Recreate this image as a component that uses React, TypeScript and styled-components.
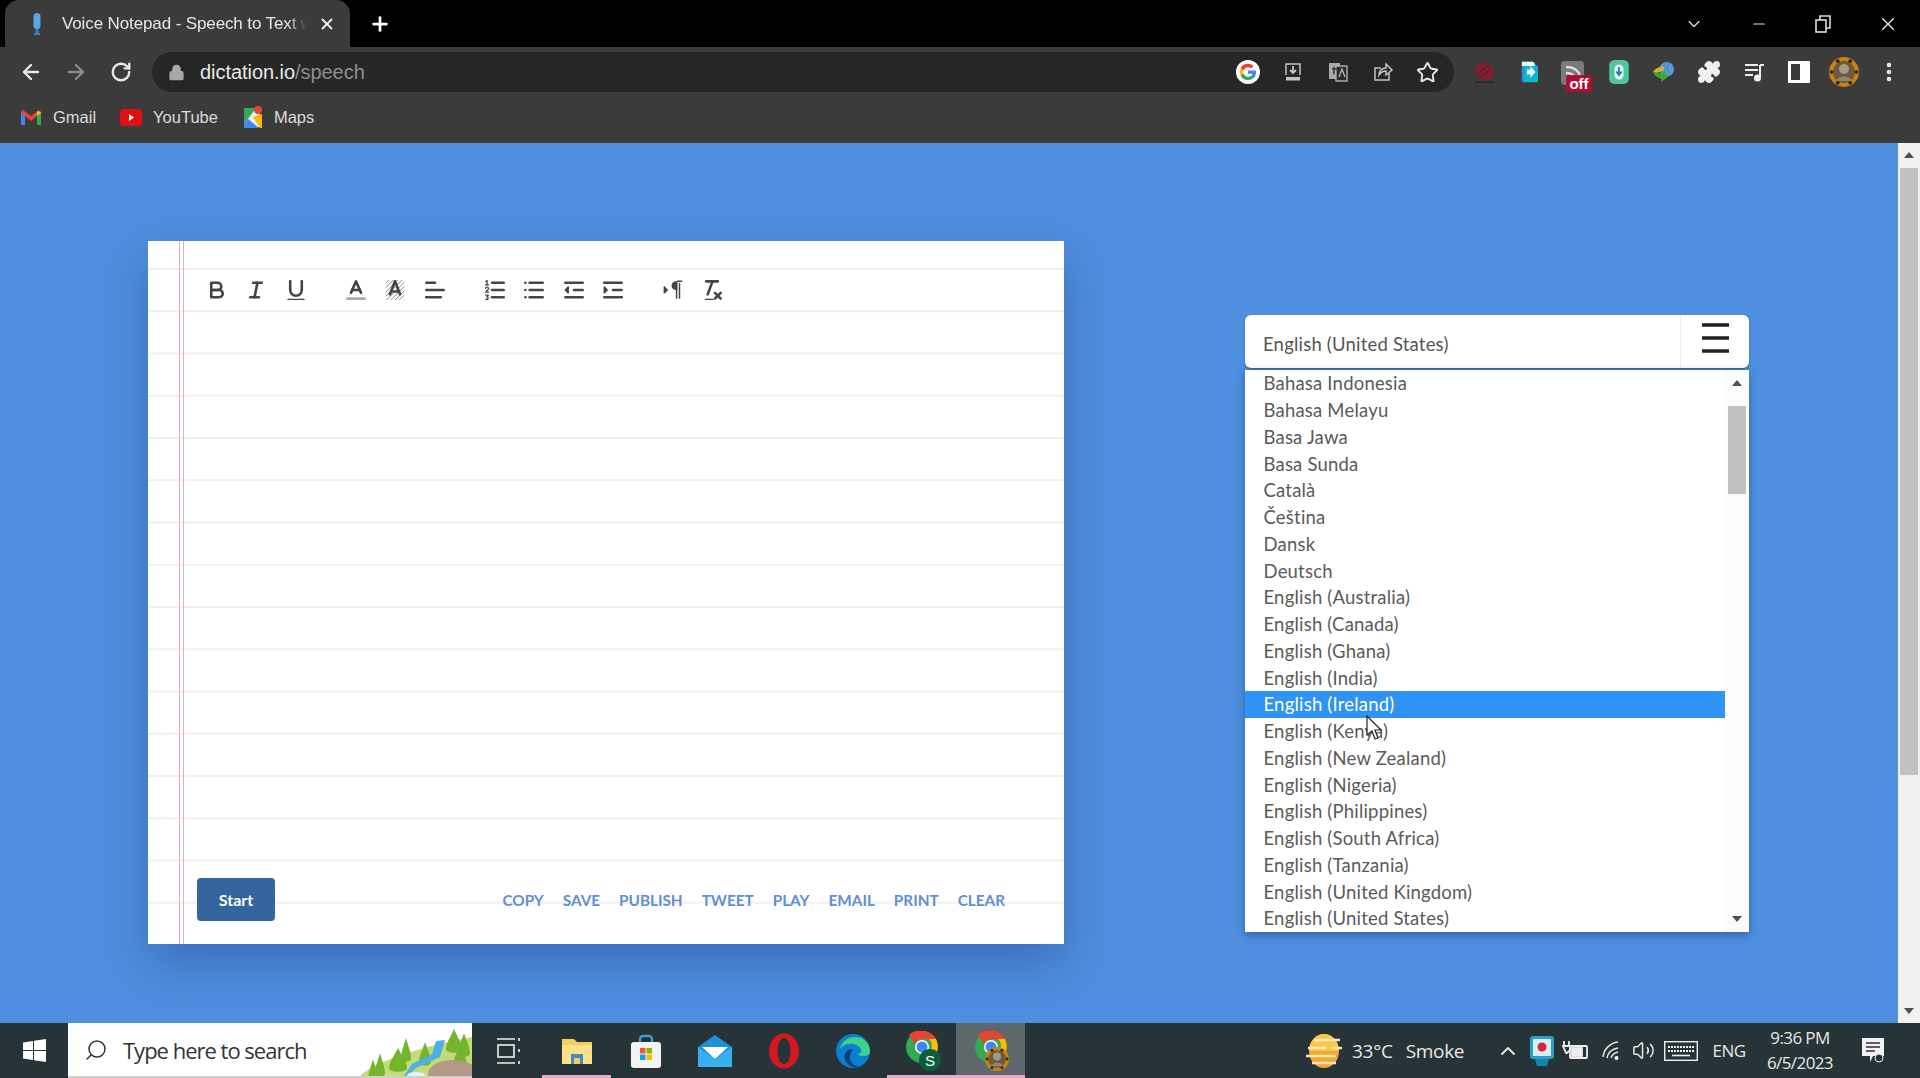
import React from "react";
import styled, { createGlobalStyle } from "styled-components";
import { ArrowLeft, ArrowRight, RotateCw, Lock, Star, Plus, X, Minus, ChevronDown, ChevronUp, Puzzle, EllipsisVertical, Search, Volume2 } from "lucide-react";

const Global = createGlobalStyle`
  html, body { margin: 0; padding: 0; height: 100%; overflow: hidden; background: #000; }
  * { box-sizing: border-box; }
  #root { height: 100%; }
`;

const Screen = styled.div`
  width: 1920px; height: 1078px; display: flex; flex-direction: column; overflow: hidden;
  font-family: "Liberation Sans", Arial, sans-serif;
`;

/* ---- browser chrome ---- */
const TabBar = styled.div`height: 47px; background: #000; display: flex; align-items: stretch; padding-left: 5px; flex: none;`;
const Tab = styled.div`
  width: 345px; background: #3b3b3b; border-radius: 14px 14px 0 0; display: flex; align-items: center; color: #e6e6e6;
  padding-left: 26px;
`;
const TabTitle = styled.span`
  width: 245px; margin-left: 19px; overflow: hidden; white-space: nowrap; font-size: 17px; letter-spacing: -0.12px;
  -webkit-mask-image: linear-gradient(90deg, #000 92%, transparent 100%);
  mask-image: linear-gradient(90deg, #000 92%, transparent 100%);
`;
const TabClose = styled.span`display: flex; margin-left: 11px; color: #eee;`;
const NewTab = styled.span`width: 60px; display: flex; align-items: center; justify-content: center; color: #fff;`;
const TabSpacer = styled.div`flex: 1;`;
const WinBtn = styled.span`width: 64.6px; display: flex; align-items: center; justify-content: center; color: #e8e8e8;`;

const Toolbar = styled.div`height: 50px; background: #3b3b3b; display: flex; align-items: center; padding: 0 8.5px 0 8px; flex: none;`;
const Slot = styled.span<{ $dim?: boolean; $soft?: boolean }>`
  width: 45px; height: 40px; flex: none; display: flex; align-items: center; justify-content: center;
  color: ${(p) => (p.$dim ? "#8a8a8a" : p.$soft ? "#c4c4c4" : "#e8e8e8")};
`;
const Omnibox = styled.div`
  flex: 1; height: 40px; margin: 0 7.5px 0 9px; background: #262626; border-radius: 20px; display: flex; align-items: center;
  padding: 0 4px 0 16px;
`;
const LockWrap = styled.span`display: flex; color: #a8a8a8; margin-right: 15px;`;
const Url = styled.span`font-family: "Liberation Sans", sans-serif; font-size: 20px; color: #e8e8e8; flex: 1; letter-spacing: -0.05px;`;
const UrlPath = styled.span`color: #8f8f8f;`;
const Bookmarks = styled.div`height: 46px; background: #3b3b3b; display: flex; align-items: center; padding: 0 0 6px 20px; flex: none;`;
const Bookmark = styled.span<{ $gap: number }>`
  display: flex; align-items: center; color: #dcdcdc; font-size: 16.5px; margin-right: ${(p) => p.$gap}px; gap: 11px;
`;

/* ---- page ---- */
const Page = styled.div`height: 880px; flex: none; display: flex; background: #4f8fe0;`;
const Content = styled.div`flex: 1; display: flex; align-items: flex-start; padding: 98px 0 0 148px;`;
const Paper = styled.div`
  width: 916px; height: 703px; display: flex; flex-direction: column; box-shadow: 0 20px 46px rgba(20, 40, 90, 0.32);
  background-color: #fff;
  background-image:
    linear-gradient(90deg, transparent 31px, #eba9c3 31px, #eba9c3 32px, transparent 32px, transparent 35px, #eba9c3 35px, #eba9c3 36px, transparent 36px),
    linear-gradient(180deg, #f1eff3 0, #f1eff3 2px, transparent 2px);
  background-size: 100% 100%, 100% 42.25px;
  background-position: 0 0, 0 27px;
`;
const EditorBar = styled.div`display: flex; align-items: center; height: 40px; margin: 29px 0 0 49px;`;
const EditorGroup = styled.div`display: flex; margin-right: 20.4px;`;
const EditorBtn = styled.span`width: 39.5px; height: 40px; display: flex; align-items: center; justify-content: center;`;
const Footer = styled.div`margin-top: auto; display: flex; align-items: center; justify-content: space-between; padding: 0 59px 23px 49px;`;
const StartBtn = styled.button`
  width: 78px; height: 43px; border: 0; border-radius: 4px; background: #34659f; color: #fff; font: 700 16px Lato, sans-serif; padding: 0;
`;
const Actions = styled.div`display: flex; gap: 19px;`;
const ActionLink = styled.span`font: 700 15.3px Lato, sans-serif; color: #5f8fd6;`;

const Panel = styled.div`width: 504px; margin: 74px 0 0 181px; display: flex; flex-direction: column; gap: 2px;`;
const SelectBox = styled.div`
  height: 53px; background: #fff; border-radius: 6px; display: flex; box-shadow: 0 1px 2px rgba(30, 50, 100, 0.6);
  font: 400 18.5px Lato, sans-serif; letter-spacing: 0.2px; color: #555;
`;
const SelectValue = styled.div`flex: 1; display: flex; align-items: center; padding: 4px 0 0 18px; border-right: 1px solid #eee;`;
const MenuBtn = styled.div`width: 68px; display: flex; align-items: center; justify-content: center; padding: 0 0 8px 0;`;
const ListBox = styled.div`
  height: 562px; background: #fff; display: flex; box-shadow: 0 3px 8px rgba(20, 40, 90, 0.45); position: relative;
  font: 400 18.5px Lato, sans-serif; letter-spacing: 0.2px; color: #5a5a5a;
`;
const Options = styled.div`flex: 1; display: flex; flex-direction: column;`;
const Option = styled.div<{ $active?: boolean }>`
  height: 26.75px; flex: none; display: flex; align-items: center; padding-left: 18.5px;
  background: ${(p) => (p.$active ? "#2f93f5" : "transparent")};
  color: ${(p) => (p.$active ? "#fff" : "inherit")};
`;
const ListScroll = styled.div`width: 24px; background: #fbfbfb; display: flex; flex-direction: column; align-items: center;`;
const ArrowUp = styled.span`
  width: 0; height: 0; margin-top: 10px; border: 5px solid transparent; border-top: 0; border-bottom: 6px solid #505050;
`;
const ArrowDown = styled.span`
  width: 0; height: 0; margin-top: auto; margin-bottom: 10px; border: 5px solid transparent; border-bottom: 0; border-top: 6px solid #505050;
`;
const ListThumb = styled.span`width: 18px; height: 88px; background: #c1c1c1; margin-top: 20px;`;
const Cursor = styled.svg`position: absolute; left: 121px; top: 345px;`;

const PageScroll = styled.div`width: 22px; background: #f1f1f1; display: flex; flex-direction: column; align-items: center;`;
const PageArrowUp = styled(ArrowUp)`margin-top: 9px;`;
const PageArrowDown = styled(ArrowDown)`margin-bottom: 9px;`;
const PageThumb = styled.span`width: 18px; height: 607px; background: #c1c1c1; margin-top: 10px;`;

/* ---- taskbar ---- */
const Taskbar = styled.div`height: 55px; flex: none; background: #263337; display: flex; align-items: stretch; color: #e8e8e8;`;
const StartSlot = styled.span`width: 68px; display: flex; align-items: center; justify-content: center;`;
const SearchBox = styled.div`
  width: 404px; background: #fff; display: flex; align-items: center; padding-left: 16px; color: #333; font: 400 22px "Open Sans", sans-serif;
  letter-spacing: -1px; border-bottom: 2px solid #cfcfcf; overflow: hidden;
`;
const SearchLabel = styled.span`margin-left: 15px;`;
const Hills = styled.svg`margin-left: auto; align-self: flex-end;`;
const TaskApps = styled.div`display: flex; margin-left: 1px;`;
const TaskApp = styled.span<{ $active?: boolean; $open?: boolean }>`
  width: 69px; display: flex; align-items: center; justify-content: center;
  background: ${(p) => (p.$active ? "#5e686b" : "transparent")};
  border-bottom: 3px solid ${(p) => (p.$open ? "#e8a9c6" : "transparent")};
  padding-top: 3px;
`;
const Tray = styled.div`margin-left: auto; display: flex; align-items: stretch; padding-right: 23px;`;
const Weather = styled.div`width: 188px; display: flex; align-items: center; font: 400 19px "Open Sans", sans-serif; letter-spacing: -0.3px; gap: 10px; padding-left: 3px;`;
const WeatherWord = styled.span`margin-left: 3px;`;
const TrayItem = styled.span<{ $w: number }>`
  width: ${(p) => p.$w}px; display: flex; align-items: center; justify-content: center; font: 400 17px "Open Sans", sans-serif; letter-spacing: -0.5px;
`;
const Clock = styled.div`
  width: 98px; display: flex; flex-direction: column; align-items: center; justify-content: center; gap: 3px;
  font: 400 17px/22px "Open Sans", sans-serif; letter-spacing: -0.6px;
`;

/* ---- quill icons ---- */
const Q = styled.svg.attrs({ viewBox: "0 0 18 18", width: 26, height: 26 })`
  fill: none; stroke: #444; stroke-width: 1.8; stroke-linecap: round; stroke-linejoin: round;
`;
const Thin = styled.g`stroke-width: 0.9;`;
const Hatch = styled.g`stroke-width: 0.55; stroke: #666; stroke-linecap: butt;`;
const QF = styled.g`fill: #444; stroke: none;`;

const BoldI = () => <Q><path d="M5,4H9.5A2.5,2.5,0,0,1,12,6.5v0A2.5,2.5,0,0,1,9.5,9H5V4Z" /><path d="M5,9h5.5A2.5,2.5,0,0,1,13,11.5v0A2.5,2.5,0,0,1,10.5,14H5V9Z" /></Q>;
const ItalicI = () => <Q><line x1="7" x2="13" y1="4" y2="4" /><line x1="5" x2="11" y1="14" y2="14" /><line x1="8" x2="10" y1="14" y2="4" /></Q>;
const UnderI = () => <Q><path d="M5,3V9a4,4,0,0,0,4,4h0a4,4,0,0,0,4-4V3" /><QF><rect x="3" y="15" width="12" height="1" rx=".5" /></QF></Q>;
const ColorI = () => <Q><line x1="3" x2="15" y1="15" y2="15" stroke="#aaa" /><polyline points="5.5 11 9 3 12.5 11" /><line x1="11.63" x2="6.38" y1="9" y2="9" /></Q>;
const BgI = () => (
  <Q>
    <defs><clipPath id="hatch-box"><rect x="2.5" y="2" width="13" height="14" /></clipPath></defs>
    <Hatch clipPath="url(#hatch-box)">
      {[4, 7, 10, 13, 16, 19, 22, 25, 28, 31, 34].map((c) => (
        <line key={c} x1={c} y1="0" x2="0" y2={c} />
      ))}
    </Hatch>
    <polyline points="5.5 12 9 3 12.5 12" /><line x1="11.63" x2="6.38" y1="10" y2="10" />
  </Q>
);
const AlignI = () => <Q><line x1="3" x2="15" y1="9" y2="9" /><line x1="3" x2="13" y1="14" y2="14" /><line x1="3" x2="9" y1="4" y2="4" /></Q>;
const OlI = () => (
  <Q>
    <line x1="7" x2="15" y1="4" y2="4" /><line x1="7" x2="15" y1="9" y2="9" /><line x1="7" x2="15" y1="14" y2="14" />
    <Thin><line x1="2.5" x2="4.5" y1="5.5" y2="5.5" /><path d="M3.5,5.500V2.500L2.700,3" /><path d="M2.500,7.800a1,1,0,1,1,1.700.9L2.500,10.500h2" /><path d="M2.600,12.500H4.400L3.400,13.800a.9.9,0,1,1-.8,1.400" /></Thin>
  </Q>
);
const UlI = () => <Q><line x1="6" x2="15" y1="4" y2="4" /><line x1="6" x2="15" y1="9" y2="9" /><line x1="6" x2="15" y1="14" y2="14" /><line x1="3" x2="3" y1="4" y2="4" /><line x1="3" x2="3" y1="9" y2="9" /><line x1="3" x2="3" y1="14" y2="14" /></Q>;
const OutdentI = () => <Q><line x1="3" x2="15" y1="14" y2="14" /><line x1="3" x2="15" y1="4" y2="4" /><line x1="9" x2="15" y1="9" y2="9" /><QF><polygon points="5 7 5 11 3 9 5 7" stroke="#444" strokeWidth="1" /></QF></Q>;
const IndentI = () => <Q><line x1="3" x2="15" y1="14" y2="14" /><line x1="3" x2="15" y1="4" y2="4" /><line x1="9" x2="15" y1="9" y2="9" /><QF><polygon points="3 7 3 11 5 9 3 7" stroke="#444" strokeWidth="1" /></QF></Q>;
const DirI = () => <Q><QF><polygon points="3 11 5 9 3 7 3 11" stroke="#444" strokeWidth="1" /><path d="M11,3a3,3,0,0,0,0,6h1V3H11Z" /><rect x="11" y="4" width="1" height="11" /><rect x="13" y="4" width="1" height="11" /></QF><line x1="12" x2="15" y1="3" y2="3" strokeWidth="1" /></Q>;
const CleanI = () => <Q><line x1="5" x2="13" y1="3" y2="3" /><line x1="6" x2="9.35" y1="12" y2="3" /><line x1="11" x2="15" y1="11" y2="15" /><line x1="15" x2="11" y1="11" y2="15" /><QF><rect x="4" y="15" width="6" height="1" rx=".5" /></QF></Q>;

/* ---- brand and extension drawings ---- */
const MicFav = () => <svg width="12" height="24" viewBox="0 0 12 24"><rect x="2.5" y="1" width="7" height="16" rx="3.500" fill="#5aa7e8" /><rect x="4.500" y="17" width="3" height="5" fill="#3b7fc0" /><rect x="3" y="21" width="6" height="2" fill="#3b7fc0" /></svg>;
const GmailI = () => <svg width="22" height="17" viewBox="0 0 22 17"><path d="M1 3v13h4V7l6 5 6-5v9h4V3l-2-2-8 6-8-6z" fill="#ea4335" /><path d="M1 3v13h4V7z" fill="#4285f4" /><path d="M17 7v9h4V3z" fill="#34a853" /><path d="M17 2l4 1v1l-4 3z" fill="#fbbc04" /></svg>;
const YouTubeI = () => <svg width="22" height="17" viewBox="0 0 22 17"><rect width="22" height="17" rx="4" fill="#e01010" /><path d="M9 5l5 3.500L9 12z" fill="#fff" /></svg>;
const MapsI = () => <svg width="20" height="24" viewBox="0 0 20 24"><path d="M1 3h12L1 19z" fill="#34a853" /><path d="M1 19L13 3l6 10-1 9H4z" fill="#e8edf2" /><path d="M1 19l4-5 11 9H1z" fill="#4285f4" /><path d="M10 12l9-3v14h-2z" fill="#fbbc04" /><circle cx="15" cy="5" r="4" fill="#ea4335" /></svg>;
const GoogleI = () => <svg width="24" height="24" viewBox="0 0 24 24"><circle cx="12" cy="12" r="12" fill="#fff" /><path d="M20 12.200c0-.6 0-1.200-.2-1.700H12v3.200h4.500a3.900 3.900 0 0 1-1.700 2.500l2.700 2.100c1.600-1.400 2.500-3.500 2.500-6.100z" fill="#4285f4" /><path d="M12 20c2.200 0 4-.7 5.500-2l-2.700-2.100c-.7.500-1.700.8-2.800.8-2.100 0-3.900-1.400-4.600-3.400L4.600 15.400A8 8 0 0 0 12 20z" fill="#34a853" /><path d="M7.400 13.300a4.800 4.800 0 0 1 0-3L4.600 8.200a8 8 0 0 0 0 7.200z" fill="#fbbc04" /><path d="M12 7.200c1.200 0 2.300.4 3.100 1.200l2.400-2.400A8 8 0 0 0 4.600 8.200l2.800 2.100c.7-1.700 2.500-3.100 4.600-3.100z" fill="#ea4335" /></svg>;
const LineIcon = styled.svg.attrs({ viewBox: "0 0 24 24", width: 24, height: 24 })`fill: none; stroke: currentColor; stroke-width: 1.5;`;
const InstallI = () => <LineIcon><path d="M5 15V4h14v11" /><path d="M12 6v7M9 10l3 3 3-3" strokeWidth="1.8" /><rect x="5" y="17" width="14" height="3.500" fill="currentColor" stroke="none" /></LineIcon>;
const TranslateI = () => <svg width="24" height="24" viewBox="0 0 24 24"><rect x="3" y="3" width="11" height="16" fill="#aaa" /><rect x="10" y="6" width="11" height="15" fill="#2b2b2b" stroke="#bbb" strokeWidth="1.300" /><path d="M6 9h5M8 6.500v8" stroke="#333" strokeWidth="1.400" /><path d="M13 17l3-8 3 8" stroke="#bbb" strokeWidth="1.300" fill="none" /></svg>;
const ShareI = () => <LineIcon><path d="M18 13v7H4V8h6" /><path d="M8 15c0-4 3-7 7-7V4l6 6-6 5v-4c-3 0-5 1-7 4z" /></LineIcon>;
const RedSI = () => (
  <svg width="21" height="23" viewBox="0 0 24 26">
    <circle cx="12" cy="11.500" r="10" fill="#8c1a2c" />
    <path d="M5 14l12-10M7 19l12-10" stroke="#3a3030" strokeWidth="1.800" />
    <rect x="1" y="23.500" width="22" height="1.200" fill="#1f1f1f" />
  </svg>
);
const BlueFileI = () => <svg width="19" height="22" viewBox="0 0 22 26"><path d="M2 1h13l6 6v17a1 1 0 0 1-1 1H5a3 3 0 0 1-3-3z" fill="#12b4d6" /><path d="M2 1h13l2 2v3H2z" fill="#f0f8fb" /><path d="M2 6h3v19a3 3 0 0 1-3-3z" fill="#2f8fe0" /><path d="M8 10h4V6l6 7-6 7v-4H8z" fill="#e9fbff" /></svg>;
const OffI = () => (
  <svg width="34" height="40" viewBox="0 0 34 40" style={{ overflow: "visible" }}>
    <rect x="4" y="9" width="23" height="24" rx="4" fill="#7a7a7a" />
    <path d="M9 21c5 0 8 2 9 5M9 15c8 0 13 4 14 9" stroke="#ddd" strokeWidth="2.400" fill="none" />
    <rect x="9" y="23" width="26" height="17" rx="3" fill="#ae0f2e" />
    <text x="22" y="36.500" fontSize="15" fontWeight="700" fontFamily="Liberation Sans" fill="#fff" textAnchor="middle">off</text>
  </svg>
);
const GreenI = () => <svg width="22" height="24" viewBox="0 0 22 27"><rect width="22" height="27" rx="6" fill="#4ec79f" /><rect x="6" y="5" width="10" height="17" rx="5" fill="#e2f7f0" /><path d="M11 8v8M8 13l3 4 3-4" stroke="#2276c0" strokeWidth="2" fill="none" /></svg>;
const IdmI = () => <svg width="24" height="22" viewBox="0 0 26 24"><circle cx="16" cy="9" r="8" fill="#5d9bd5" /><path d="M12 3c3 3 3 9 0 13M18 2c-2 4-1 10 3 13" stroke="#3f7dc0" fill="none" /><path d="M1 12c3-5 9-6 13-5l-2 3-7 3z" fill="#d8b02e" /><path d="M1 12l10 2v-3l8 5-9 7v-4C6 19 3 16 1 12z" fill="#3fa535" /></svg>;
const QueueI = () => <svg width="24" height="24" viewBox="0 0 24 24" fill="none" stroke="#eee" strokeWidth="2"><path d="M3 5h13M3 10h13M3 15h8" /><path d="M18 5h4M18 5v13" /><circle cx="15.500" cy="18" r="2.500" fill="#eee" /></svg>;
const PanelI = () => <svg width="22" height="22" viewBox="0 0 22 22"><rect x="1.500" y="1.500" width="19" height="19" fill="none" stroke="#fff" strokeWidth="3" /><rect x="12" y="2" width="8" height="18" fill="#fff" /></svg>;
const AvatarI = ({ size = 30 }: { size?: number }) => (
  <svg width={size} height={size} viewBox="0 0 30 30">
    <circle cx="15" cy="15" r="15" fill="#c8820f" />
    <circle cx="15" cy="15" r="11" fill="#6b5a3c" />
    <circle cx="15" cy="12" r="5" fill="#a59a88" />
    <path d="M7 24c2-6 14-6 16 0z" fill="#8d8579" />
    {[0, 60, 120, 180, 240, 300].map((a) => (
      <circle key={a} cx={15 + 12.5 * Math.cos((a * Math.PI) / 180)} cy={15 + 12.5 * Math.sin((a * Math.PI) / 180)} r="1.800" fill="#2a1f0c" />
    ))}
  </svg>
);
const WinLogo = () => <svg width="23" height="23" viewBox="0 0 23 23" fill="#fff"><path d="M0 3.500L10 2v9H0zM11 1.800L23 0v11H11zM0 12h10v9L0 19.500zM11 12h12v11l-12-1.800z" /></svg>;
const treeTops: [number, number, number][] = [
  [13, 36, 5], [20, 30, 5], [38, 25, 9], [46, 15, 5], [65, 19, 6], [94, 6, 8], [104, 10, 6], [100, 22, 7],
];
const HillsArt = () => (
  <Hills width="112" height="53" viewBox="0 0 112 53">
    <path d="M0 53C14 40 50 26 112 14v39z" fill="#c4dc78" />
    {treeTops.map(([x, top, w]) => (
      <path key={`${x}-${top}`} d={`M${x} ${top}C${x + w * 0.3} ${top + 6} ${x + w} ${top + 14} ${x + w} ${top + 20}C${x + w} ${top + 25} ${x - w} ${top + 25} ${x - w} ${top + 20}C${x - w} ${top + 14} ${x - w * 0.3} ${top + 6} ${x} ${top}z`} fill="#74b52e" />
    ))}
    <path d="M76 18l9-1-5 17-24 11-8 8H44l8-12 20-10z" fill="#4fb0e8" />
    <ellipse cx="93" cy="51" rx="25" ry="14" fill="#b39a86" />
    <ellipse cx="56" cy="52" rx="9" ry="3" fill="#e5f3f8" />
  </Hills>
);
const FolderI = () => <svg width="32" height="30" viewBox="0 0 32 30"><path d="M1 3h12l3 3h15v22H1z" fill="#f6cf5b" /><path d="M1 9h30v19H1z" fill="#fce188" /><rect x="10" y="18" width="12" height="10" fill="#3d8fc4" /><rect x="13" y="22" width="6" height="6" fill="#f6cf5b" /></svg>;
const StoreI = () => <svg width="32" height="34" viewBox="0 0 32 34"><path d="M10 9V5a3 3 0 0 1 3-3h6a3 3 0 0 1 3 3v4" fill="none" stroke="#37a0d8" strokeWidth="2.400" /><rect x="1" y="8" width="30" height="26" rx="3" fill="#f3f3f3" /><rect x="10" y="14" width="5.500" height="5.500" fill="#ef5a2a" /><rect x="16.500" y="14" width="5.500" height="5.500" fill="#7fba00" /><rect x="10" y="20.500" width="5.500" height="5.500" fill="#00a4ef" /><rect x="16.500" y="20.500" width="5.500" height="5.500" fill="#ffb900" /></svg>;
const MailI = () => <svg width="34" height="32" viewBox="0 0 34 32"><path d="M0 12L17 0l17 12v20H0z" fill="#1e90d8" /><path d="M4 12h26L17 24z" fill="#fff" /><path d="M0 12v20h34V12L17 24z" fill="#36b0ee" /></svg>;
const OperaI = () => <svg width="32" height="36" viewBox="0 0 32 36"><ellipse cx="16" cy="18" rx="15" ry="17.500" fill="#d5171f" /><ellipse cx="16" cy="18" rx="6.500" ry="13" fill="#263337" /></svg>;
const EdgeI = () => <svg width="34" height="34" viewBox="0 0 34 34"><circle cx="17" cy="17" r="17" fill="#0c7fd0" /><path d="M34 17c0-8-7-14-15-14C11 3 5 9 4 15c3-4 8-6 13-5 6 1 9 5 8 8-1 2-3 2-4 1 3 5 13 4 13-2z" fill="#3ed28a" /><path d="M17 15c-6 0-10 5-8 11 2 5 9 9 16 7-7 0-12-5-11-11 0-3 2-5 3-7z" fill="#063e78" /></svg>;
const ChromeI = ({ badge }: { badge?: "s" | "a" }) => (
  <svg width="34" height="42" viewBox="0 0 34 42" style={{ overflow: "visible" }}>
    <circle cx="17" cy="17" r="16" fill="#34a853" />
    <path d="M17 1a16 16 0 0 1 14 8H17a8 8 0 0 0-7.500 5L4 5a16 16 0 0 1 13-4z" fill="#ea4335" />
    <path d="M31 9a16 16 0 0 1-11 23l6-13a8 8 0 0 0-2-10z" fill="#fbbc04" />
    <circle cx="17" cy="17" r="7" fill="#fff" /><circle cx="17" cy="17" r="5.500" fill="#4285f4" />
    {badge === "s" && <circle cx="25" cy="30" r="11" fill="#0d5c3f" />}
    {badge === "s" && <text x="25" y="36" fontSize="15" fontFamily="Liberation Sans" fill="#fff" textAnchor="middle">S</text>}
    {badge === "a" && <g transform="translate(11 17)"><AvatarI size={24} /></g>}
  </svg>
);
const SunI = () => <svg width="36" height="38" viewBox="0 0 36 38"><ellipse cx="18" cy="19" rx="15" ry="17" fill="#f2a92e" /><path d="M18 2a15 17 0 0 1 15 17H3A15 17 0 0 1 18 2z" fill="#f7c948" /><g stroke="#f5e7bb" strokeWidth="2.400"><path d="M8 8h26M2 16h18M26 16h10M0 24h30M6 31h24" /></g></svg>;
const TrayRecI = () => <svg width="26" height="32" viewBox="0 0 26 32"><rect x="1" y="1" width="24" height="23" rx="3" fill="#2aa0c8" /><rect x="4" y="4" width="18" height="17" fill="#d8eef5" /><circle cx="13" cy="12" r="4.500" fill="#d2263a" /><path d="M6 24h14l-2 7H8z" fill="#1782a8" /></svg>;
const PlugI = () => <svg width="28" height="22" viewBox="0 0 28 22" fill="none" stroke="#eee" strokeWidth="1.800"><rect x="9" y="6" width="17" height="12" rx="1" /><rect x="11" y="8" width="10" height="8" fill="#eee" /><path d="M3 1v5M8 1v5M2 6h7v4l-3 3h-1z" /></svg>;
const WifiDiagI = () => <svg width="20" height="22" viewBox="0 0 20 22" fill="none" stroke="#e4e4e4" strokeWidth="1.500"><path d="M2 17C3 9 9 3 17 2" /><path d="M6 18c1-5 5-9 11-10" /><path d="M10 18c1-3 3-5 7-6" /><circle cx="15.500" cy="18" r="2" fill="#fff" stroke="none" /></svg>;
const KeyboardI = () => <svg width="34" height="20" viewBox="0 0 34 20" fill="none" stroke="#eee"><rect x=".7" y=".7" width="32.600" height="18.600" strokeWidth="1.400" /><path d="M4 6h26M4 10h26" strokeWidth="2" strokeDasharray="2 1" /><path d="M8 14.500h18" strokeWidth="1.600" /></svg>;
const NotifyI = () => <svg width="24" height="27" viewBox="0 0 24 27"><path d="M1 1h22v18H12l-3 6v-6H1z" fill="#f2f2f2" /><path d="M5 6h14M5 10h14M5 14h9" stroke="#263337" strokeWidth="1.500" /><circle cx="18" cy="21" r="4" fill="#263337" stroke="#eee" /></svg>;

const languages = [
  "Bahasa Indonesia", "Bahasa Melayu", "Basa Jawa", "Basa Sunda", "Català", "Čeština", "Dansk", "Deutsch",
  "English (Australia)", "English (Canada)", "English (Ghana)", "English (India)", "English (Ireland)", "English (Kenya)",
  "English (New Zealand)", "English (Nigeria)", "English (Philippines)", "English (South Africa)", "English (Tanzania)",
  "English (United Kingdom)", "English (United States)",
];
const actions = ["COPY", "SAVE", "PUBLISH", "TWEET", "PLAY", "EMAIL", "PRINT", "CLEAR"];
const editorGroups = [
  [BoldI, ItalicI, UnderI],
  [ColorI, BgI, AlignI],
  [OlI, UlI, OutdentI, IndentI],
  [DirI, CleanI],
];

export default function App() {
  return (
    <Screen>
      <Global />
      <TabBar>
        <Tab>
          <MicFav />
          <TabTitle>Voice Notepad - Speech to Text w</TabTitle>
          <TabClose><X size={18} strokeWidth={2.4} /></TabClose>
        </Tab>
        <NewTab><Plus size={22} strokeWidth={3} /></NewTab>
        <TabSpacer />
        <WinBtn><ChevronDown size={20} strokeWidth={1.3} /></WinBtn>
        <WinBtn><Minus size={18} strokeWidth={1.6} /></WinBtn>
        <WinBtn>
          <svg width="16" height="18" viewBox="0 0 16 18" fill="none" stroke="#ddd" strokeWidth="1.600"><rect x="1" y="5" width="10" height="12" /><path d="M5 5V1h10v12h-4" /></svg>
        </WinBtn>
        <WinBtn><X size={22} strokeWidth={1.5} /></WinBtn>
      </TabBar>
      <Toolbar>
        <Slot><ArrowLeft size={24} strokeWidth={2.4} /></Slot>
        <Slot $dim><ArrowRight size={24} strokeWidth={2.4} /></Slot>
        <Slot><RotateCw size={22} strokeWidth={2.6} /></Slot>
        <Omnibox>
          <LockWrap><Lock size={17} fill="#a8a8a8" strokeWidth={2.2} /></LockWrap>
          <Url>dictation.io<UrlPath>/speech</UrlPath></Url>
          <Slot><GoogleI /></Slot>
          <Slot $soft><InstallI /></Slot>
          <Slot $soft><TranslateI /></Slot>
          <Slot $soft><ShareI /></Slot>
          <Slot><Star size={23} strokeWidth={2} /></Slot>
        </Omnibox>
        <Slot><RedSI /></Slot>
        <Slot><BlueFileI /></Slot>
        <Slot><OffI /></Slot>
        <Slot><GreenI /></Slot>
        <Slot><IdmI /></Slot>
        <Slot><Puzzle size={24} fill="#f0f0f0" color="#f0f0f0" /></Slot>
        <Slot><QueueI /></Slot>
        <Slot><PanelI /></Slot>
        <Slot><AvatarI /></Slot>
        <Slot><EllipsisVertical size={24} strokeWidth={2.6} /></Slot>
      </Toolbar>
      <Bookmarks>
        <Bookmark $gap={24}><GmailI />Gmail</Bookmark>
        <Bookmark $gap={25}><YouTubeI />YouTube</Bookmark>
        <Bookmark $gap={0}><MapsI />Maps</Bookmark>
      </Bookmarks>

      <Page>
        <Content>
          <Paper>
            <EditorBar>
              {editorGroups.map((g, i) => (
                <EditorGroup key={i}>
                  {g.map((Icon, j) => (
                    <EditorBtn key={j}><Icon /></EditorBtn>
                  ))}
                </EditorGroup>
              ))}
            </EditorBar>
            <Footer>
              <StartBtn>Start</StartBtn>
              <Actions>
                {actions.map((a) => <ActionLink key={a}>{a}</ActionLink>)}
              </Actions>
            </Footer>
          </Paper>
          <Panel>
            <SelectBox>
              <SelectValue>English (United States)</SelectValue>
              <MenuBtn>
                <svg width="27" height="30" viewBox="0 0 27 30" stroke="#222" strokeWidth="3.500"><path d="M0 2h27M0 15h27M0 28h27" /></svg>
              </MenuBtn>
            </SelectBox>
            <ListBox>
              <Options>
                {languages.map((l) => (
                  <Option key={l} $active={l === "English (Ireland)"}>{l}</Option>
                ))}
              </Options>
              <ListScroll>
                <ArrowUp />
                <ListThumb />
                <ArrowDown />
              </ListScroll>
              <Cursor width="18" height="26" viewBox="0 0 18 26">
                <path d="M1 1v19l5-4 3 8 3-1-3-8h6z" fill="#fff" stroke="#222" strokeWidth="1.200" />
              </Cursor>
            </ListBox>
          </Panel>
        </Content>
        <PageScroll>
          <PageArrowUp />
          <PageThumb />
          <PageArrowDown />
        </PageScroll>
      </Page>

      <Taskbar>
        <StartSlot><WinLogo /></StartSlot>
        <SearchBox>
          <Search size={24} strokeWidth={1.5} style={{ transform: "scaleX(-1)" }} />
          <SearchLabel>Type here to search</SearchLabel>
          <HillsArt />
        </SearchBox>
        <TaskApps>
          <TaskApp>
            <svg width="26" height="32" viewBox="0 0 26 32" fill="none" stroke="#eee" strokeWidth="1.600"><path d="M2 4h18M2 28h18" /><rect x="3" y="10" width="16" height="12" /><path d="M24 3v3M24 14v3M24 26v3" /></svg>
          </TaskApp>
          <TaskApp $open><FolderI /></TaskApp>
          <TaskApp><StoreI /></TaskApp>
          <TaskApp><MailI /></TaskApp>
          <TaskApp><OperaI /></TaskApp>
          <TaskApp><EdgeI /></TaskApp>
          <TaskApp $open><ChromeI badge="s" /></TaskApp>
          <TaskApp $open $active><ChromeI badge="a" /></TaskApp>
        </TaskApps>
        <Tray>
          <Weather><SunI /><span>33°C</span><WeatherWord>Smoke</WeatherWord></Weather>
          <TrayItem $w={34}><ChevronUp size={24} strokeWidth={1.8} /></TrayItem>
          <TrayItem $w={34}><TrayRecI /></TrayItem>
          <TrayItem $w={32}><PlugI /></TrayItem>
          <TrayItem $w={40}><WifiDiagI /></TrayItem>
          <TrayItem $w={24}><Volume2 size={23} strokeWidth={1.6} /></TrayItem>
          <TrayItem $w={52}><KeyboardI /></TrayItem>
          <TrayItem $w={44}>ENG</TrayItem>
          <Clock><span>9:36 PM</span><span>6/5/2023</span></Clock>
          <TrayItem $w={48}><NotifyI /></TrayItem>
        </Tray>
      </Taskbar>
    </Screen>
  );
}
